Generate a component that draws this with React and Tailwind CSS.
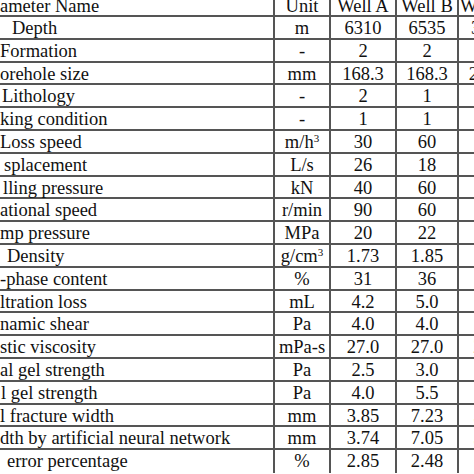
import React from "react";

// visible part of the parameter table (left side and last column are cropped)
const rows = [
  { name: "Depth", pad: 12, unit: "m", a: "6310", b: "6535", c: "3960" },
  { name: "Formation", pad: 0, unit: "-", a: "2", b: "2", c: "1" },
  { name: "orehole size", pad: 0, unit: "mm", a: "168.3", b: "168.3", c: "215.9" },
  { name: "Lithology", pad: 2, unit: "-", a: "2", b: "1", c: "1" },
  { name: "king condition", pad: 0, unit: "-", a: "1", b: "1", c: "1" },
  { name: "Loss speed", pad: 0, unit: "m/h", sup: "3", a: "30", b: "60", c: "45" },
  { name: "splacement", pad: 4, unit: "L/s", a: "26", b: "18", c: "22" },
  { name: "lling pressure", pad: 3, unit: "kN", a: "40", b: "60", c: "50" },
  { name: "ational speed", pad: 0, unit: "r/min", a: "90", b: "60", c: "70" },
  { name: "mp pressure", pad: 0, unit: "MPa", a: "20", b: "22", c: "21" },
  { name: "Density", pad: 7, unit: "g/cm", sup: "3", a: "1.73", b: "1.85", c: "1.80" },
  { name: "-phase content", pad: 0, unit: "%", a: "31", b: "36", c: "33" },
  { name: "ltration loss", pad: 0, unit: "mL", a: "4.2", b: "5.0", c: "4.6" },
  { name: "namic shear", pad: 0, unit: "Pa", a: "4.0", b: "4.0", c: "4.0" },
  { name: "stic viscosity", pad: 0, unit: "mPa-s", a: "27.0", b: "27.0", c: "27.0" },
  { name: "al gel strength", pad: 0, unit: "Pa", a: "2.5", b: "3.0", c: "2.5" },
  { name: "l gel strength", pad: 1, unit: "Pa", a: "4.0", b: "5.5", c: "5.0" },
  { name: "l fracture width", pad: 0, unit: "mm", a: "3.85", b: "7.23", c: "5.10" },
  { name: "dth by artificial neural network", pad: 0, unit: "mm", a: "3.74", b: "7.05", c: "5.02" },
  { name: "error percentage", pad: 7, unit: "%", a: "2.85", b: "2.48", c: "1.57" },
];

const grid = "grid grid-cols-[273px_56px_66px_62px_63px]";
const cell = "border-l-2 border-[#555] text-center whitespace-nowrap";

export default function App() {
  return (
    <div
      className="w-[474px] h-[474px] overflow-hidden bg-white text-[#111] text-[18.5px]"
      style={{ fontFamily: '"Liberation Serif", "Times New Roman", serif' }}
    >
      <div className="w-[520px]">
        {/* Header */}
        <div className={`${grid} h-[17px] leading-[13px] border-b-2 border-[#555]`}>
          <div className="whitespace-nowrap">ameter Name</div>
          <div className={cell}>Unit</div>
          <div className={cell}>Well A</div>
          <div className={cell}>Well B</div>
          <div className={`${cell} text-left pl-[1px]`}>Well C</div>
        </div>

        {/* Body */}
        {rows.map((r, i) => (
          <div
            key={i}
            className={`${grid} h-[22.8px] leading-[23px] ${
              i < rows.length - 1 ? "border-b-2 border-[#555]" : ""
            }`}
          >
            <div className="whitespace-nowrap" style={{ paddingLeft: r.pad }}>
              {r.name}
            </div>
            <div className={cell}>
              {r.unit}
              {r.sup && <sup className="text-[11px]">{r.sup}</sup>}
            </div>
            <div className={cell}>{r.a}</div>
            <div className={cell}>{r.b}</div>
            <div className={cell}>{r.c}</div>
          </div>
        ))}
      </div>
    </div>
  );
}
